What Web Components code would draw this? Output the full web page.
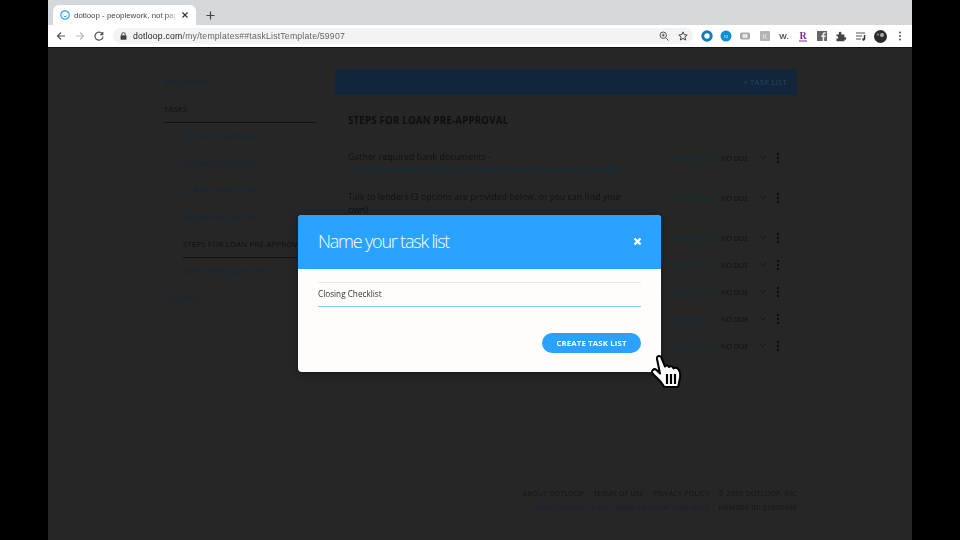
<!DOCTYPE html>
<html>
<head>
<meta charset="utf-8">
<title>dotloop</title>
<style>
    html, body { margin: 0; height: 100%; background: #000; overflow: hidden; }
    body { display: flex; justify-content: center; font-family: "Open Sans", "Liberation Sans", sans-serif; }
</style>
</head>
<body>
<browser-window>
    <dot-page>
        <side-nav slot="side"></side-nav>
        <task-panel slot="main"></task-panel>
    </dot-page>
    <task-modal></task-modal>
    <hand-cursor></hand-cursor>
</browser-window>
<script>
"use strict";
// base class: clones the template into an open shadow root
class Base extends HTMLElement {
    constructor() {
        super();
        let temp = document.createElement('template');
        temp.innerHTML = this.template();
        this.attachShadow({ mode: "open" }).appendChild(temp.content.cloneNode(true));
    }
}

class BrowserWindow extends Base {
    template() {
        const ext = (inner) => `<svg width="12" height="12" viewBox="0 0 12 12">${inner}</svg>`;
        return `
        <style>
            :host { display: flex; flex-direction: column; position: relative; width: 864px; height: 540px; background: #262626; }
            #tabs { height: 25px; background: #d4d8db; display: flex; align-items: flex-end; padding-left: 5px; flex: none; }
            #tab { width: 143px; height: 20px; background: #fff; border-radius: 6px 6px 0 0; display: flex; align-items: center; padding: 0 7px; box-sizing: border-box; gap: 4px; font: 7.9px "Liberation Sans", sans-serif; color: #444; filter: blur(.25px); }
            #tab span { flex: 1; overflow: hidden; white-space: nowrap; -webkit-mask-image: linear-gradient(to right, #000 90%, transparent); mask-image: linear-gradient(to right, #000 90%, transparent); }
            #plus { margin: 0 0 4px 9px; width: 11px; height: 11px; }
            #bar { height: 22px; background: #fff; display: flex; align-items: center; flex: none; padding-left: 8px; }
            #nav { display: flex; gap: 9px; width: 57px; flex: none; filter: blur(.25px); }
            #omni { width: 580px; height: 16px; flex: none; background: #f1f3f4; border-radius: 8px; display: flex; align-items: center; padding: 0 5px 0 7px; box-sizing: border-box; font: 8.7px "Liberation Sans", sans-serif; color: #666; letter-spacing: .2px; }
            #omni b { font-weight: normal; color: #222; }
            #lock { margin-right: 6px; }
            #url { flex: 1; filter: blur(.25px); }
            #omni-icons { display: flex; gap: 9px; }
            #exts { display: flex; align-items: center; gap: 7.2px; margin-left: 8px; filter: blur(.25px); }
            #page { flex: 1; min-height: 0; border-top: 1px solid #111; display: flex; }
        </style>
        <div id="tabs">
            <div id="tab">
                <svg width="10" height="10" viewBox="0 0 10 10"><circle cx="5" cy="5" r="4.2" fill="#fff" stroke="#35a4e8" stroke-width="1.2"/><path d="M3 5.5c.6 1.4 3.4 1.4 4 0" fill="none" stroke="#35a4e8"/></svg>
                <span>dotloop - peoplework, not pap</span>
                <svg width="8" height="8" viewBox="0 0 8 8"><path d="M1.5 1.5l5 5M6.5 1.5l-5 5" stroke="#333" stroke-width="1.2"/></svg>
            </div>
            <svg id="plus" viewBox="0 0 11 11"><path d="M5.5 1.5v8M1.5 5.5h8" stroke="#444" stroke-width="1.2"/></svg>
        </div>
        <div id="bar">
            <div id="nav">
                <svg width="10" height="10" viewBox="0 0 10 10"><path d="M9 5H1.5M5 1.5L1.5 5 5 8.500" fill="none" stroke="#555" stroke-width="1.200"/></svg>
                <svg width="10" height="10" viewBox="0 0 10 10"><path d="M1 5h7.500M5 1.500L8.500 5 5 8.500" fill="none" stroke="#bbb" stroke-width="1.200"/></svg>
                <svg width="10" height="10" viewBox="0 0 10 10"><path d="M8.500 3.200A4 4 0 1 0 9 5.500M8.800 1v2.600H6.200" fill="none" stroke="#555" stroke-width="1.200"/></svg>
            </div>
            <div id="omni">
                <svg id="lock" width="7" height="8" viewBox="0 0 7 8"><rect x=".5" y="3.300" width="6" height="4.500" rx=".8" fill="#444"/><path d="M1.800 3.500V2.300a1.700 1.700 0 0 1 3.400 0v1.200" fill="none" stroke="#444"/></svg>
                <span id="url"><b>dotloop.com</b>/my/templates##taskListTemplate/59907</span>
                <div id="omni-icons">
                    <svg width="10" height="10" viewBox="0 0 10 10"><circle cx="4.200" cy="4.200" r="3.200" fill="none" stroke="#555"/><path d="M6.700 6.700L9.500 9.500M2.700 4.200h3M4.200 2.700v3" stroke="#555"/></svg>
                    <svg width="10" height="10" viewBox="0 0 10 10"><path d="M5 .9l1.200 2.800 3 .3-2.300 2 .7 3L5 7.400 2.400 9l.7-3-2.300-2 3-.3z" fill="none" stroke="#444"/></svg>
                </div>
            </div>
            <div id="exts">
                ${ext('<circle cx="6" cy="6" r="4.200" fill="#fff" stroke="#0f7cbd" stroke-width="3"/>')}
                ${ext('<circle cx="6" cy="6" r="5.500" fill="#0f8fd6"/><text x="6" y="8" font-size="5" text-anchor="middle" fill="#bfe6fb" font-family="Liberation Sans">ro</text>')}
                ${ext('<rect x="1" y="2.500" width="10" height="7" rx="1.500" fill="#aaa"/><rect x="3.500" y="4" width="5" height="4" fill="#e6e6e6"/>')}
                ${ext('<rect x="1" y="1" width="10" height="10" rx="1" fill="#b4b4b4"/><text x="6" y="8.500" font-size="7" text-anchor="middle" fill="#eee" font-family="Liberation Sans">K</text>')}
                ${ext('<text x="6" y="8.500" font-size="8" font-weight="bold" text-anchor="middle" fill="#555" font-family="Liberation Sans">W.</text>')}
                ${ext('<text x="6" y="9" font-size="10" font-weight="bold" text-anchor="middle" fill="#7b2d9b" font-family="Liberation Serif">R</text><path d="M2 11h8" stroke="#7b2d9b"/>')}
                ${ext('<rect x="1" y="1" width="10" height="10" fill="#666"/><path d="M8.200 11V7h1.300l.2-1.600H8.200v-1c0-.5.200-.8.800-.8h.8V2.200H8.700C7.300 2.200 6.600 3 6.600 4.300v1.100H5.300V7h1.300v4z" fill="#eee"/>')}
                ${ext('<path d="M1.500 4.500h2.300V3a1.300 1.300 0 0 1 2.600 0v1.500h3v2.700h1a1.300 1.300 0 0 1 0 2.500h-1v1.500H1.500V8.500h1a1.200 1.200 0 0 0 0-2.200h-1z" fill="#444"/>')}
                ${ext('<path d="M1 3h9M1 6h6M1 9h5" stroke="#555"/><path d="M9.500 5v4.500" stroke="#333" stroke-width="1.500"/><circle cx="8.500" cy="9.500" r="1.200" fill="#333"/>')}
                <svg width="13" height="13" viewBox="0 0 13 13"><circle cx="6.500" cy="6.500" r="6.500" fill="#2b2b2b"/><circle cx="8" cy="5" r="2" fill="#aaa"/><circle cx="4" cy="4.500" r="1.300" fill="#777"/></svg>
                <svg width="6" height="10" viewBox="0 0 6 10" style="margin-left:3px"><circle cx="3" cy="1.500" r="1" fill="#555"/><circle cx="3" cy="5" r="1" fill="#555"/><circle cx="3" cy="8.500" r="1" fill="#555"/></svg>
            </div>
        </div>
        <div id="page"><slot></slot></div>
        `;
    }
}

class DotPage extends Base {
    template() {
        return `
        <style>
            :host { display: flex; flex: 1; padding: 21px 115px 0 116px; gap: 19px; filter: blur(.4px); }
            #side { width: 152px; flex: none; }
            #main { flex: 1; min-width: 0; }
        </style>
        <div id="side"><slot name="side"></slot></div>
        <div id="main"><slot name="main"></slot></div>
        `;
    }
}

class SideNav extends Base {
    template() {
        return `
        <style>
            :host { display: block; padding-top: 1px; font: 500 7.7px "Open Sans", sans-serif; letter-spacing: .25px; text-transform: uppercase; color: #10283a; white-space: nowrap; }
            div { height: 27px; line-height: 25px; box-sizing: border-box; }
            .sub { margin-left: 19px; }
            .on { color: #0e0e0e; }
            .line { height: 26px; margin-bottom: 1px; border-bottom: 1px solid #101010; }
        </style>
        <div>Documents</div>
        <div class="on line">Tasks</div>
        <div class="sub">Listing checklist</div>
        <div class="sub">Buying checklist</div>
        <div class="sub">Client move plan</div>
        <div class="sub">Pre-offer checklist</div>
        <div class="sub on line">Steps for loan pre-approval</div>
        <div class="sub">New offer activities</div>
        <div>Clauses</div>
        `;
    }
}

class TaskRow extends Base {
    template() {
        return `
        <style>
            :host { display: flex; padding: 7px 0 7px 13px; min-height: 13px; font: 500 8.7px/13px "Open Sans", sans-serif; letter-spacing: .08px; color: #101010; }
            #text { width: 284px; flex: none; margin-right: 37px; }
            #meta { display: flex; flex: none; align-items: center; height: 13px; font: 500 7.2px "Open Sans", sans-serif; letter-spacing: 0; white-space: nowrap; }
            #who { color: #10303a; width: 52px; }
            #due { color: #0f0f0f; width: 38px; overflow: hidden; }
            svg { flex: none; }
            #more { margin-left: 9px; }
        </style>
        <div id="text"><slot></slot></div>
        <div id="meta">
            <span id="who">UNASSIGNED</span><span id="due">NO DUE</span>
            <svg width="8" height="5" viewBox="0 0 8 5"><path d="M1 1l3 3 3-3" fill="none" stroke="#181818"/></svg>
            <svg id="more" width="4" height="12" viewBox="0 0 4 12"><circle cx="2" cy="2" r="1.200" fill="#0c0c0c"/><circle cx="2" cy="6" r="1.200" fill="#0c0c0c"/><circle cx="2" cy="10" r="1.200" fill="#0c0c0c"/></svg>
        </div>
        `;
    }
}

class TaskPanel extends Base {
    template() {
        return `
        <style>
            :host { display: flex; flex-direction: column; height: 100%; }
            #bar { height: 26px; background: #11263a; border-radius: 1px; display: flex; align-items: center; justify-content: flex-end; padding-right: 10px; font: 500 7.7px "Open Sans", sans-serif; color: #264860; letter-spacing: .25px; }
            h2 { margin: 19px 0 17px 13px; font: 700 9.7px/13px "Open Sans", sans-serif; letter-spacing: .2px; color: #0e0e0e; }
            a { color: #10303f; text-decoration: none; font-size: 8.7px; white-space: nowrap; }
            footer { margin-top: auto; margin-bottom: 26px; text-align: right; font: 500 7.1px/14px "Open Sans", sans-serif; letter-spacing: .2px; color: #141414; white-space: nowrap; }
            footer span { margin-left: 9px; }
            footer .blue { color: #161f36; }
        </style>
        <div id="bar">+ TASK LIST</div>
        <h2>STEPS FOR LOAN PRE-APPROVAL</h2>
        <task-row>Gather required bank documents -<br><a>http://www.quickanswers.com/blog/documents-needed-mortgage</a></task-row>
        <task-row>Talk to lenders (3 options are provided below, or you can find your own)</task-row>
        <task-row></task-row>
        <task-row></task-row>
        <task-row></task-row>
        <task-row></task-row>
        <task-row></task-row>
        <footer>
            <div><span>ABOUT DOTLOOP</span><span>TERMS OF USE</span><span>PRIVACY POLICY</span><span>© 2020 DOTLOOP, INC</span></div>
            <div><span class="blue">HELP CENTER</span><span class="blue">CALL 1(888)-DOTLOOP (368-5667)</span><span>MEMBER ID: 21636490</span></div>
        </footer>
        `;
    }
}

class TaskModal extends Base {
    template() {
        return `
        <style>
            :host { display: block; position: absolute; left: 250px; top: 215px; width: 363px; height: 157px; background: #fefdfc; border-radius: 4px; overflow: hidden; box-shadow: 0 2px 10px rgba(0,0,0,.35); filter: blur(.2px); }
            header { height: 54px; background: #2aa2ff; display: flex; align-items: center; justify-content: space-between; padding: 0 19px 2px 20px; box-sizing: border-box; color: #fff; }
            h1 { margin: 0; font: 300 18px "Open Sans", sans-serif; letter-spacing: -1.2px; }
            #body { padding: 13px 20px 0; }
            #field { height: 25px; padding-bottom: 2px; box-sizing: border-box; border-top: 1px solid #e8e8e8; border-bottom: 1px solid #8ccbea; display: flex; align-items: center; font: 400 8.2px "Open Sans", sans-serif; color: #333; }
            #foot { display: flex; justify-content: flex-end; margin-top: 26px; }
            button { width: 99px; height: 20px; border: 0; padding: 0 0 1px; border-radius: 10px; background: #2aa2ff; color: #fff; font: 700 7.7px "Open Sans", sans-serif; letter-spacing: .2px; }
        </style>
        <header>
            <h1>Name your task list</h1>
            <svg width="9" height="9" viewBox="0 0 9 9"><path d="M1.500 1.500l6 6M7.500 1.500l-6 6" stroke="#fff" stroke-width="2.400"/></svg>
        </header>
        <div id="body">
            <div id="field">Closing Checklist</div>
            <div id="foot"><button>CREATE TASK LIST</button></div>
        </div>
        `;
    }
}

class HandCursor extends Base {
    template() {
        return `
        <style>
            :host { display: block; position: absolute; left: 602px; top: 354px; width: 34px; height: 36px; filter: blur(.3px); }
            svg { display: block; }
        </style>
        <svg width="34" height="36" viewBox="0 0 34 36">
            <path d="M7 5C6.500 1.500 10.500 .8 11.500 4L15 12.500C16 11 18 11 19 13 20.500 11.800 22.500 12 23.500 14.500 25 13.500 27 13.500 28.500 15.500 30 17 30.500 20 30 24L28 33H14.500L10.500 27.500 3 20C0.500 17 4 13.800 6.500 16L10 19.500Z" fill="#fff" stroke="#000" stroke-width="2" stroke-linejoin="round"/>
            <path d="M17 20v10M21 20v10M25 20v10" stroke="#000" stroke-width="2.200"/>
        </svg>
        `;
    }
}

customElements.define("browser-window", BrowserWindow);
customElements.define("dot-page", DotPage);
customElements.define("side-nav", SideNav);
customElements.define("task-row", TaskRow);
customElements.define("task-panel", TaskPanel);
customElements.define("task-modal", TaskModal);
customElements.define("hand-cursor", HandCursor);
</script>
</body>
</html>
